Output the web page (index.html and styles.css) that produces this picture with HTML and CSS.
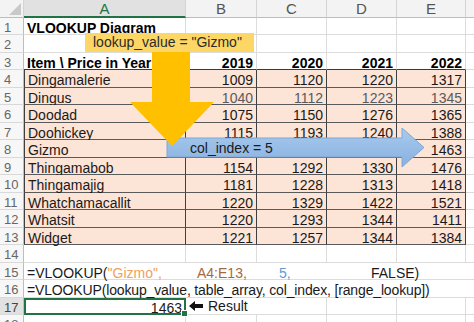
FILE: index.html
```html
<!DOCTYPE html>
<html>
<head>
<meta charset="utf-8">
<link rel="stylesheet" href="styles.css">
</head>
<body>
<div class="page">
  <div class="sheet">
    <!-- header row -->
    <div class="ch corner"><span class="tri"></span></div>
    <div class="ch active">A</div>
    <div class="ch">B</div>
    <div class="ch">C</div>
    <div class="ch">D</div>
    <div class="ch">E</div>
    <div class="ch last"></div>

    <!-- row 1 -->
    <div class="rh">1</div>
    <div class="c b">VLOOKUP Diagram</div>
    <div class="c"></div><div class="c"></div><div class="c"></div><div class="c"></div><div class="c last"></div>

    <!-- row 2 -->
    <div class="rh">2</div>
    <div class="c"></div><div class="c"></div><div class="c"></div><div class="c"></div><div class="c"></div><div class="c last"></div>

    <!-- row 3 -->
    <div class="rh">3</div>
    <div class="c b top">Item \ Price in Year</div>
    <div class="c b n top">2019</div>
    <div class="c b n top">2020</div>
    <div class="c b n top">2021</div>
    <div class="c b n top">2022</div>
    <div class="c last"></div>

    <!-- rows 4-13 -->
    <div class="rh">4</div>
    <div class="t first">Dingamalerie</div><div class="t n">1009</div><div class="t n">1120</div><div class="t n">1220</div><div class="t n">1317</div><div class="c last"></div>

    <div class="rh">5</div>
    <div class="t first">Dingus</div><div class="t n g">1040</div><div class="t n g">1112</div><div class="t n g">1223</div><div class="t n g">1345</div><div class="c last"></div>

    <div class="rh">6</div>
    <div class="t first">Doodad</div><div class="t n">1075</div><div class="t n">1150</div><div class="t n">1276</div><div class="t n">1365</div><div class="c last"></div>

    <div class="rh">7</div>
    <div class="t first">Doohickey</div><div class="t n">1115</div><div class="t n">1193</div><div class="t n">1240</div><div class="t n">1388</div><div class="c last"></div>

    <div class="rh">8</div>
    <div class="t first">Gizmo</div><div class="t n"></div><div class="t n"></div><div class="t n"></div><div class="t n">1463</div><div class="c last"></div>

    <div class="rh">9</div>
    <div class="t first">Thingamabob</div><div class="t n">1154</div><div class="t n">1292</div><div class="t n">1330</div><div class="t n">1476</div><div class="c last"></div>

    <div class="rh">10</div>
    <div class="t first">Thingamajig</div><div class="t n">1181</div><div class="t n">1228</div><div class="t n">1313</div><div class="t n">1418</div><div class="c last"></div>

    <div class="rh">11</div>
    <div class="t first">Whatchamacallit</div><div class="t n">1220</div><div class="t n">1329</div><div class="t n">1422</div><div class="t n">1521</div><div class="c last"></div>

    <div class="rh">12</div>
    <div class="t first">Whatsit</div><div class="t n">1220</div><div class="t n">1293</div><div class="t n">1344</div><div class="t n">1411</div><div class="c last"></div>

    <div class="rh">13</div>
    <div class="t first">Widget</div><div class="t n">1221</div><div class="t n">1257</div><div class="t n">1344</div><div class="t n">1384</div><div class="c last"></div>

    <!-- row 14 -->
    <div class="rh">14</div>
    <div class="c"></div><div class="c"></div><div class="c"></div><div class="c"></div><div class="c"></div><div class="c last"></div>

    <!-- row 15 -->
    <div class="rh">15</div>
    <div class="c span formula">
      <span class="seg s1">=VLOOKUP(<span class="o">"Gizmo",</span></span><span class="seg s2 br">A4:E13,</span><span class="seg s3 bl">5,</span><span class="seg">FALSE)</span>
    </div>

    <!-- row 16 -->
    <div class="rh">16</div>
    <div class="c span tight">=VLOOKUP(lookup_value, table_array, col_index, [range_lookup])</div>

    <!-- row 17 -->
    <div class="rh sel-rh">17</div>
    <div class="c n sel">1463</div>
    <div class="c span2 result">
      <svg class="larr" width="14" height="10" viewBox="0 0 14 10"><path d="M0 5 L6 0 L6 3 L14 3 L14 7 L6 7 L6 10 Z" fill="#111"/></svg>
      <span>Result</span>
    </div>
    <div class="c"></div><div class="c"></div><div class="c last"></div>

    <!-- row 18 -->
    <div class="rh">18</div>
    <div class="c"></div><div class="c"></div><div class="c"></div><div class="c"></div><div class="c"></div><div class="c last"></div>
  </div>

  <div class="callout">lookup_value = "Gizmo"</div>

  <svg class="overlay" width="474" height="322" viewBox="0 0 474 322">
    <defs>
      <linearGradient id="blu" x1="0" y1="0" x2="0" y2="1">
        <stop offset="0" stop-color="#a8caee"/>
        <stop offset="1" stop-color="#88b1df"/>
      </linearGradient>
    </defs>
    <polygon points="167,138 402,138 402,128 424,147.5 402,167 402,157 167,157" fill="url(#blu)" stroke="#7ea7d6" stroke-width="1"/>
  </svg>
  <div class="colidx">col_index = 5</div>
  <svg class="overlay" width="474" height="322" viewBox="0 0 474 322">
    <polygon points="152,52 190,52 190,102 214,102 172,146 130,102 152,102" fill="#ffc000"/>
  </svg>
</div>
</body>
</html>
```

FILE: styles.css
```css
html, body {
  margin: 0;
  padding: 0;
  background: #ffffff;
}

.page {
  position: relative;
  width: 474px;
  height: 322px;
  overflow: hidden;
  font-family: "Liberation Sans", Arial, sans-serif;
  font-size: 14px;
  color: #1a1a1a;
}

.sheet {
  display: grid;
  grid-template-columns: 24px 162px 71px 70px 70px 69px 8px;
  grid-auto-rows: 17.5px;
}

.sheet > div {
  box-sizing: border-box;
  white-space: nowrap;
}

/* column headers */
.ch {
  background: #f3f3f3;
  border-right: 1px solid #d4d4d4;
  border-bottom: 1px solid #bdbdbd;
  color: #555555;
  font-size: 15px;
  text-align: center;
  line-height: 17px;
  overflow: hidden;
}
.ch.active {
  background: #e1e1e1;
  color: #217346;
  border-bottom: 2px solid #217346;
}
.ch.corner {
  position: relative;
  background: #f3f3f3;
}
.tri {
  position: absolute;
  right: 2px;
  bottom: 2px;
  width: 0;
  height: 0;
  border-left: 12px solid transparent;
  border-bottom: 12px solid #c9c9c9;
}
.ch.last, .c.last {
  border-right: none;
}

/* row headers */
.rh {
  background: #f7f7f7;
  border-right: 1px solid #bdbdbd;
  border-bottom: 1px solid #d9d9d9;
  color: #666666;
  font-size: 13px;
  padding-left: 4px;
  padding-top: 2px;
  line-height: 15px;
}
.rh.sel-rh {
  background: #e1e1e1;
  color: #444444;
}

/* ordinary cells */
.c {
  border-right: 1px solid #dcdcdc;
  border-bottom: 1px solid #dcdcdc;
  padding: 2px 3px 0 3px;
  line-height: 16px;
}
.c.top {
  border-bottom: 1px solid #3a3a3a;
}
.b {
  font-weight: bold;
  color: #000000;
}
.n {
  text-align: right;
}

/* table cells */
.t {
  background: #fce4d6;
  border-right: 1px solid #3f3f3f;
  border-bottom: 1px solid #5a5a5a;
  padding: 2px 3px 0 3px;
  line-height: 16px;
}
.t.first {
  border-left: 1px solid #3f3f3f;
  padding-left: 3px;
}
.g {
  color: #5a5a5a;
}

/* spanning cells */
.span {
  grid-column: 2 / -1;
  border-right: none;
}
.tight {
  letter-spacing: -0.15px;
}
.span2 {
  grid-column: 3 / 5;
  display: flex;
  align-items: center;
  gap: 5px;
  padding-left: 3px;
  padding-top: 1px;
}
.larr {
  flex: none;
}
.formula {
  display: flex;
}
.seg {
  display: inline-block;
  flex: none;
}
.s1 { width: 170px; }
.s2 { width: 82px; }
.s3 { width: 92px; }
.o { color: #f0a060; }
.br { color: #a8683e; }
.bl { color: #5b9bd5; }

/* selected cell */
.sel {
  position: relative;
  outline: 2px solid #217346;
  outline-offset: -2px;
}
.sel::after {
  content: "";
  position: absolute;
  right: -3px;
  bottom: -3px;
  width: 5px;
  height: 5px;
  background: #217346;
  border: 1px solid #ffffff;
}

/* overlays */
.callout {
  position: absolute;
  left: 85px;
  top: 33px;
  width: 169px;
  height: 19px;
  box-sizing: border-box;
  background: #fdd766;
  padding-left: 8px;
  line-height: 19px;
  color: #2a2a2a;
  white-space: nowrap;
}
.overlay {
  position: absolute;
  left: 0;
  top: 0;
  pointer-events: none;
}
.colidx {
  position: absolute;
  left: 190px;
  top: 139px;
  line-height: 18px;
  color: #1a1a1a;
  white-space: nowrap;
}
```
